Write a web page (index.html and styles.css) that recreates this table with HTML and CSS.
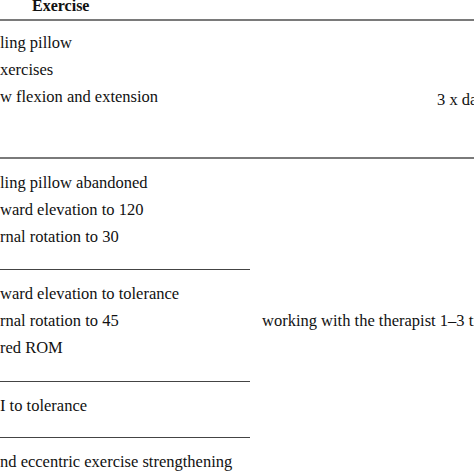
FILE: index.html
```html
<!DOCTYPE html>
<html>
<head>
<meta charset="utf-8">
<link rel="stylesheet" href="styles.css">
</head>
<body>
<div class="table">
  <div class="head">
    <div class="hcell">Exercise</div>
  </div>
  <div class="section sec1">
    <div class="left">
      <div class="line">ling pillow</div>
      <div class="line">xercises</div>
      <div class="line">w flexion and extension</div>
    </div>
    <div class="right r1">3 x daily</div>
  </div>
  <div class="section sec2">
    <div class="left">
      <div class="sub">
        <div class="line">ling pillow abandoned</div>
        <div class="line">ward elevation to 120</div>
        <div class="line">rnal rotation to 30</div>
      </div>
      <div class="sub sub-b">
        <div class="line">ward elevation to tolerance</div>
        <div class="line">rnal rotation to 45</div>
        <div class="line">red ROM</div>
      </div>
      <div class="sub sub-c">
        <div class="line">I to tolerance</div>
      </div>
      <div class="sub last">
        <div class="line">nd eccentric exercise strengthening</div>
      </div>
    </div>
    <div class="right r2">working with the therapist 1–3 times a week</div>
  </div>
</div>
</body>
</html>
```
FILE: styles.css
```css
html, body {
  margin: 0;
  padding: 0;
  background: #fff;
  overflow: hidden;
}
body {
  width: 474px;
  height: 474px;
  font-family: "Liberation Serif", "Times New Roman", serif;
  font-size: 16.5px;
  color: #111;
}
.table {
  width: 474px;
  white-space: nowrap;
}
.head {
  height: 19px;
  border-bottom: 2px solid #7a7a7a;
}
.hcell {
  font-weight: bold;
  font-size: 16px;
  line-height: 11px;
  padding-left: 32px;
}
.section {
  display: grid;
  grid-template-columns: 250px 224px;
}
.sec1 {
  border-bottom: 2px solid #7a7a7a;
  height: 136px;
}
.sec1 .left {
  padding-top: 8px;
}
.line {
  line-height: 27px;
  height: 27px;
}
.sub {
  padding: 10px 0 19px;
  border-bottom: 1px solid #444;
}
.sub-b {
  padding-bottom: 20px;
}
.sub-c {
  padding-bottom: 18px;
}
.sub.last {
  border-bottom: none;
}
.right {
  overflow: visible;
}
.r1 {
  padding-left: 187px;
  padding-top: 65px;
  line-height: 27px;
}
.r2 {
  padding-left: 12px;
  padding-top: 148px;
  line-height: 27px;
}
```
